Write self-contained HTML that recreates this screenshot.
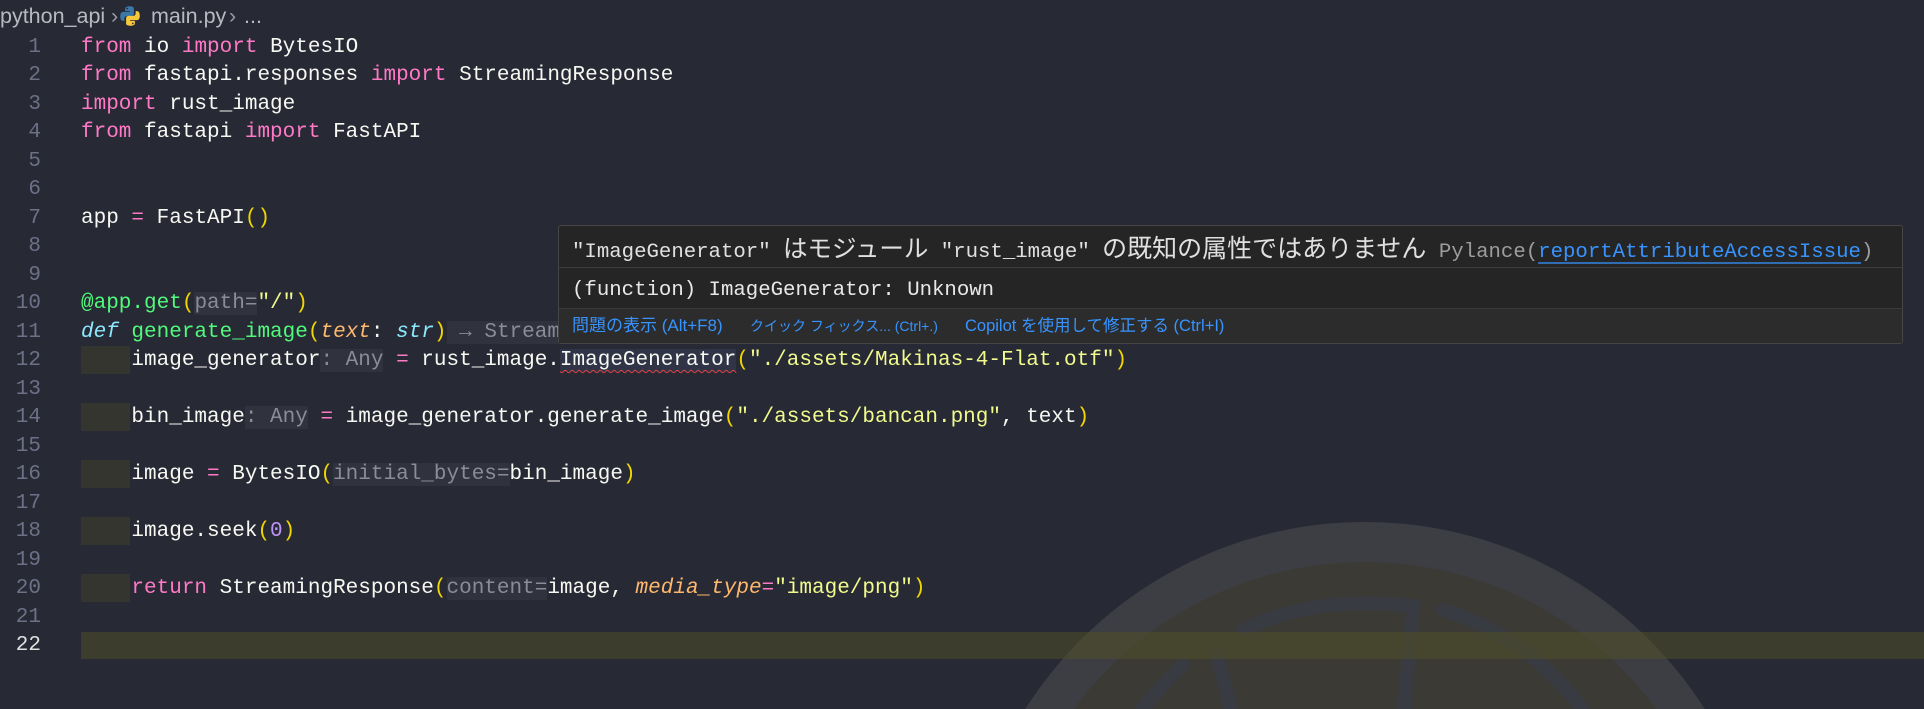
<!DOCTYPE html>
<html><head><meta charset="utf-8"><style>
html,body{margin:0;padding:0;width:1924px;height:709px;overflow:hidden;background:#272935;}
body{position:relative;font-family:"Liberation Mono","Noto Sans CJK JP",monospace;font-size:21px;color:#f8f8f2;}
.ln{position:absolute;left:0;width:41px;text-align:right;color:#6d7086;height:28px;line-height:28px;}
.ln.cur{color:#e0e0e0}
.code{position:absolute;left:81px;height:28px;line-height:28px;white-space:pre;}
.k{color:#ff79c6}.f{color:#50fa7b}.p{color:#ffb86c;font-style:italic}.c{color:#8be9fd;font-style:italic}
.s{color:#f1fa8c}.n{color:#bd93f9}.b{color:#f1d700}.h{color:#8a8c97;background:#30323d}
.ind{position:absolute;left:81px;width:49px;height:28px;background:#34352f}
.sq{text-decoration:underline wavy #e04040;text-decoration-thickness:1px;text-underline-offset:4px;background:#2f3547}
.cr{position:absolute;top:3px;font-family:"Liberation Sans",sans-serif;font-size:21.5px;color:#b8b9c0;white-space:pre;line-height:26px}
#tip{position:absolute;left:558px;top:225px;width:1345px;height:119px;background:#252526;border:1px solid #454545;border-radius:3px;z-index:5;box-sizing:border-box}
#tip .r1{position:absolute;left:13px;top:6px;color:#e0e0e0;white-space:pre;line-height:30px;font-size:20.7px}
#tip .r2{position:absolute;left:13px;top:52px;color:#e8e8e8;white-space:pre;line-height:26px;font-size:20.7px}
#tip .hr{position:absolute;left:0;right:0;top:41px;height:1px;background:#3e3e3e}
#tip .ft{position:absolute;left:0;right:0;top:82px;bottom:0;background:#2c2c2d;border-top:1px solid #3a3a3a;font-family:"Liberation Sans","Noto Sans CJK JP",sans-serif;font-size:16px;color:#3794ff;line-height:34px;white-space:pre}
#tip .ft span{position:absolute;top:0}
.jp{font-family:"Noto Sans CJK JP",sans-serif;font-size:24.5px}
</style></head><body>
<svg style="position:absolute;left:0;top:0" width="1924" height="709">
<circle cx="1365" cy="924" r="402" fill="#3d3e44"/>
<circle cx="1365" cy="924" r="362" fill="#3b3a34"/>
<g stroke="#393b42" stroke-width="14" fill="none" stroke-linecap="round">
<path d="M1243 630 Q1313 595 1413 606 L1398 780"/>
<path d="M1443 610 Q1543 640 1603 740 L1578 800"/>
<path d="M1217 655 L1273 870"/>
<path d="M1183 665 Q1123 720 1093 800"/>
</g>
</svg>
<div style="position:absolute;left:81px;top:632px;width:1843px;height:27px;background:rgba(80,78,40,0.55)"></div>
<div class="cr" style="left:0">python_api</div>
<div class="cr" style="left:111px;color:#9a9aa0">›</div>
<svg style="position:absolute;left:119px;top:5px" width="22" height="22" viewBox="0 0 18 18"><path d="M8.8 1c-4 0-3.8 1.8-3.8 1.8V5h3.9v.6H3.4S1 5.3 1 9.2s2.1 3.8 2.1 3.8h1.3v-1.8s-.1-2.1 2.1-2.1h3.7s2 0 2-2V3s.3-2-3.4-2zM6.7 2.2a.7.7 0 110 1.4.7.7 0 010-1.4z" fill="#3b77a8"/><path d="M9.2 17c4 0 3.8-1.8 3.8-1.8V13H9.1v-.6h5.5s2.4.3 2.4-3.6-2.1-3.8-2.1-3.8h-1.3v1.8s.1 2.1-2.1 2.1H7.8s-2 0-2 2V15s-.3 2 3.4 2zm2.1-1.2a.7.7 0 110-1.4.7.7 0 010 1.4z" fill="#f7c83c"/></svg>
<div class="cr" style="left:151px">main.py</div>
<div class="cr" style="left:229px;color:#9a9aa0">›</div>
<div class="cr" style="left:244px">...</div>

<div class="ind" style="top:346px"></div>
<div class="ind" style="top:403px"></div>
<div class="ind" style="top:460px"></div>
<div class="ind" style="top:517px"></div>
<div class="ind" style="top:574px"></div>

<div class="ln" style="top:34px">1</div><div class="code" style="top:34px"><span class="k">from</span> io <span class="k">import</span> BytesIO</div>
<div class="ln" style="top:62px">2</div><div class="code" style="top:62px"><span class="k">from</span> fastapi.responses <span class="k">import</span> StreamingResponse</div>
<div class="ln" style="top:91px">3</div><div class="code" style="top:91px"><span class="k">import</span> rust_image</div>
<div class="ln" style="top:119px">4</div><div class="code" style="top:119px"><span class="k">from</span> fastapi <span class="k">import</span> FastAPI</div>
<div class="ln" style="top:148px">5</div>
<div class="ln" style="top:176px">6</div>
<div class="ln" style="top:205px">7</div><div class="code" style="top:205px">app <span class="k">=</span> FastAPI<span class="b">()</span></div>
<div class="ln" style="top:233px">8</div>
<div class="ln" style="top:262px">9</div>
<div class="ln" style="top:290px">10</div><div class="code" style="top:290px"><span class="f">@app.get</span><span class="b">(</span><span class="h">path=</span><span class="s">"/"</span><span class="b">)</span></div>
<div class="ln" style="top:319px">11</div><div class="code" style="top:319px"><span class="c">def</span> <span class="f">generate_image</span><span class="b">(</span><span class="p">text</span>: <span class="c">str</span><span class="b">)</span><span class="h"> → StreamingResponse</span></div>
<div class="ln" style="top:347px">12</div><div class="code" style="top:347px">    image_generator<span class="h">: Any</span> <span class="k">=</span> rust_image.<span class="sq">ImageGenerator</span><span class="b">(</span><span class="s">"./assets/Makinas-4-Flat.otf"</span><span class="b">)</span></div>
<div class="ln" style="top:376px">13</div>
<div class="ln" style="top:404px">14</div><div class="code" style="top:404px">    bin_image<span class="h">: Any</span> <span class="k">=</span> image_generator.generate_image<span class="b">(</span><span class="s">"./assets/bancan.png"</span>, text<span class="b">)</span></div>
<div class="ln" style="top:433px">15</div>
<div class="ln" style="top:461px">16</div><div class="code" style="top:461px">    image <span class="k">=</span> BytesIO<span class="b">(</span><span class="h">initial_bytes=</span>bin_image<span class="b">)</span></div>
<div class="ln" style="top:490px">17</div>
<div class="ln" style="top:518px">18</div><div class="code" style="top:518px">    image.seek<span class="b">(</span><span class="n">0</span><span class="b">)</span></div>
<div class="ln" style="top:547px">19</div>
<div class="ln" style="top:575px">20</div><div class="code" style="top:575px">    <span class="k">return</span> StreamingResponse<span class="b">(</span><span class="h">content=</span>image, <span class="p">media_type</span><span class="k">=</span><span class="s">"image/png"</span><span class="b">)</span></div>
<div class="ln" style="top:604px">21</div>
<div class="ln cur" style="top:632px">22</div>

<div id="tip">
<div class="r1">"ImageGenerator" <span class="jp">はモジュール</span> "rust_image" <span class="jp" style="font-size:25px">の既知の属性ではありません</span> <span style="color:#9d9d9d">Pylance(</span><span style="color:#3794ff;text-decoration:underline;text-decoration-color:#2f6db5;text-underline-offset:5px">reportAttributeAccessIssue</span><span style="color:#9d9d9d">)</span></div>
<div class="hr"></div>
<div class="r2">(function) ImageGenerator: Unknown</div>
<div class="ft"><span style="left:13px;font-size:17px">問題の表示 (Alt+F8)</span><span style="left:191px;font-size:14px">クイック フィックス... (Ctrl+.)</span><span style="left:406px;font-size:16.5px">Copilot を使用して修正する (Ctrl+I)</span></div>
</div>
</body></html>
